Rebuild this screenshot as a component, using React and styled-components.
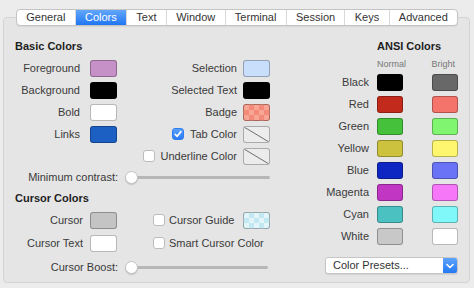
import React from "react";
import styled, { createGlobalStyle } from "styled-components";

const TABS = ["General", "Colors", "Text", "Window", "Terminal", "Session", "Keys", "Advanced"];

const ANSI = [
  { name: "Black", normal: "#000000", bright: "#686868" },
  { name: "Red", normal: "#c22a1c", bright: "#f4736b" },
  { name: "Green", normal: "#46c13b", bright: "#80f56f" },
  { name: "Yellow", normal: "#ccc23d", bright: "#fef66f" },
  { name: "Blue", normal: "#0e26c2", bright: "#6a73f6" },
  { name: "Magenta", normal: "#c136c2", bright: "#f677f7" },
  { name: "Cyan", normal: "#4bc2c1", bright: "#80f8f9" },
  { name: "White", normal: "#c8c8c8", bright: "#ffffff" },
];

const badgeChecker = "repeating-conic-gradient(#f38a79 0 25%, #f7a594 0 50%) 0 0 / 10px 10px";
const guideChecker = "repeating-conic-gradient(#c2e8f1 0 25%, #e4f5f9 0 50%) 0 0 / 10px 10px";

const App = () => {
  return (
    <>
      <GlobalStyle />
      <Window>
        <TabBar>
          {TABS.map((t) => (
            <Tab key={t} $active={t === "Colors"}>
              {t}
            </Tab>
          ))}
        </TabBar>
        <Panel>
          <LeftSection>
            <Heading>Basic Colors</Heading>
            <ColorGrid>
              <Label>Foreground</Label>
              <Swatch $bg="#c591c6" />
              <Label $pad={6}>Selection</Label>
              <Swatch $bg="#c9defb" />

              <Label>Background</Label>
              <Swatch $bg="#000000" />
              <Label $pad={6}>Selected Text</Label>
              <Swatch $bg="#000000" />

              <Label>Bold</Label>
              <Swatch $bg="#ffffff" />
              <Label $pad={6}>Badge</Label>
              <Swatch $bg={badgeChecker} />

              <Label>Links</Label>
              <Swatch $bg="#1b60c2" />
              <CheckLabel>
                <Checkbox checked />
                Tab Color
              </CheckLabel>
              <EmptySwatch />

              <span />
              <span />
              <CheckLabel>
                <Checkbox />
                Underline Color
              </CheckLabel>
              <EmptySwatch />
            </ColorGrid>

            <SliderRow>
              <SliderLabel>Minimum contrast:</SliderLabel>
              <Slider $width={145}>
                <Track />
                <Knob />
              </Slider>
            </SliderRow>

            <Heading>Cursor Colors</Heading>
            <ColorGrid $cursor>
              <Label $pad={7}>Cursor</Label>
              <Swatch $bg="#c4c4c4" />
              <CheckLabel $start>
                <Checkbox />
                Cursor Guide
              </CheckLabel>
              <Swatch $bg={guideChecker} />

              <Label $pad={7}>Cursor Text</Label>
              <Swatch $bg="#ffffff" />
              <CheckLabel $start $span>
                <Checkbox />
                Smart Cursor Color
              </CheckLabel>
            </ColorGrid>

            <SliderRow $tall>
              <SliderLabel>Cursor Boost:</SliderLabel>
              <Slider $width={143}>
                <Track />
                <Knob />
              </Slider>
            </SliderRow>
          </LeftSection>

          <AnsiGrid>
            <AnsiHeading>ANSI Colors</AnsiHeading>
            <SubLabel>Normal</SubLabel>
            <SubLabel $bright>Bright</SubLabel>
            {ANSI.map((c) => (
              <React.Fragment key={c.name}>
                <AnsiLabel>{c.name}</AnsiLabel>
                <Swatch $bg={c.normal} $w={26} />
                <Swatch $bg={c.bright} $w={26} $end />
              </React.Fragment>
            ))}
            <Dropdown>
              <DropText>Color Presets...</DropText>
              <DropButton>
                <svg width="8" height="6" viewBox="0 0 8 6">
                  <path d="M1 1.5 L4 4.5 L7 1.5" fill="none" stroke="#fff" strokeWidth="1.6" strokeLinecap="round" strokeLinejoin="round" />
                </svg>
              </DropButton>
            </Dropdown>
          </AnsiGrid>
        </Panel>
      </Window>
    </>
  );
};

const Checkbox = ({ checked }) => (
  <Box $checked={checked}>
    {checked && (
      <svg width="10" height="10" viewBox="0 0 10 10">
        <path d="M2.2 5.3 L4.2 7.3 L7.9 2.6" fill="none" stroke="#fff" strokeWidth="1.7" strokeLinecap="round" strokeLinejoin="round" />
      </svg>
    )}
  </Box>
);

const EmptySwatch = () => (
  <Swatch $bg="#ececec">
    <svg width="25" height="15" viewBox="0 0 25 15">
      <line x1="0" y1="0" x2="25" y2="15" stroke="#6f6f6f" strokeWidth="1" />
    </svg>
  </Swatch>
);

export default App;

const GlobalStyle = createGlobalStyle`
  html, body {
    margin: 0;
    padding: 0;
  }
  body {
    width: 474px;
    height: 288px;
    overflow: hidden;
    background: #ececec;
    font-family: "Liberation Sans", Arial, sans-serif;
    font-size: 11px;
    color: #3a3a3a;
  }
`;

const Window = styled.div`
  width: 474px;
  height: 288px;
  box-sizing: border-box;
  padding-top: 9px;
  display: flex;
  flex-direction: column;
`;

const TabBar = styled.div`
  align-self: center;
  display: flex;
  height: 17px;
  box-sizing: border-box;
  border: 1px solid #c3c3c3;
  border-radius: 4px;
  background: #fff;
  overflow: hidden;
  position: relative;
  z-index: 1;
  box-shadow: 0 1px 1px rgba(0, 0, 0, 0.06);
`;

const Tab = styled.div`
  padding: 0 9.3px;
  line-height: 15px;
  color: ${(p) => (p.$active ? "#fff" : "#333")};
  background: ${(p) => (p.$active ? "linear-gradient(#63a7fb, #1f76f3)" : "transparent")};
  & + & {
    border-left: 1px solid #d9d9d9;
  }
`;

const Panel = styled.div`
  flex: 1;
  margin: -9px 4px 5px 3px;
  box-sizing: border-box;
  border: 1px solid #d3d3d3;
  border-radius: 4px;
  background: #e5e5e5;
  padding: 17px 0 0 11px;
  display: flex;
`;

const LeftSection = styled.div`
  width: 296px;
  display: flex;
  flex-direction: column;
`;

const Heading = styled.div`
  height: 22px;
  line-height: 22px;
  font-weight: bold;
  color: #1f1f1f;
  white-space: nowrap;
`;

const ColorGrid = styled.div`
  display: grid;
  grid-template-columns: 75px 27px 126px 27px;
  grid-auto-rows: 22px;
  row-gap: ${(p) => (p.$cursor ? 1 : 0)}px;
  align-items: center;
`;

const Label = styled.span`
  justify-self: end;
  padding-right: ${(p) => p.$pad ?? 10}px;
  white-space: nowrap;
`;

const CheckLabel = styled.span`
  display: flex;
  align-items: center;
  gap: ${(p) => (p.$start ? 4 : 6)}px;
  white-space: nowrap;
  justify-self: ${(p) => (p.$start ? "start" : "end")};
  padding-right: ${(p) => (p.$start ? 0 : 6)}px;
  margin-left: ${(p) => (p.$start ? 36 : 0)}px;
  grid-column: ${(p) => (p.$span ? "3 / 5" : "auto")};
`;

const Box = styled.span`
  width: 12px;
  height: 12px;
  box-sizing: border-box;
  border-radius: 3px;
  display: flex;
  align-items: center;
  justify-content: center;
  border: 1px solid ${(p) => (p.$checked ? "#2e7df5" : "#bcbcbc")};
  background: ${(p) => (p.$checked ? "linear-gradient(#5aa0fa, #2a7bf4)" : "#fff")};
`;

const Swatch = styled.div`
  width: ${(p) => p.$w ?? 27}px;
  height: 17px;
  box-sizing: border-box;
  border-radius: 3px;
  border: 1px solid rgba(0, 0, 0, 0.28);
  background: ${(p) => p.$bg};
  justify-self: ${(p) => (p.$end ? "end" : "start")};
  overflow: hidden;
  svg {
    display: block;
  }
`;

const SliderRow = styled.div`
  display: flex;
  align-items: center;
  height: ${(p) => (p.$tall ? 26 : 20)}px;
`;

const SliderLabel = styled.span`
  width: 103px;
  text-align: right;
  white-space: nowrap;
`;

const Slider = styled.div`
  position: relative;
  width: ${(p) => p.$width}px;
  height: 13px;
  margin-left: 7px;
  display: flex;
  align-items: center;
`;

const Track = styled.div`
  width: 100%;
  height: 3px;
  border-radius: 2px;
  background: #b7b7b7;
`;

const Knob = styled.div`
  position: absolute;
  left: 0;
  top: 0;
  width: 13px;
  height: 13px;
  box-sizing: border-box;
  border-radius: 50%;
  background: #fff;
  border: 1px solid #c4c4c4;
  box-shadow: 0 1px 1px rgba(0, 0, 0, 0.15);
`;

const AnsiGrid = styled.div`
  display: grid;
  grid-template-columns: 58px 26px 47px;
  grid-template-rows: 22px 14px repeat(8, 22px);
  column-gap: 8px;
  align-items: center;
  align-content: start;
`;

const AnsiHeading = styled(Heading)`
  grid-column: 2 / 4;
`;

const SubLabel = styled.span`
  grid-column: ${(p) => (p.$bright ? 3 : 2)};
  justify-self: ${(p) => (p.$bright ? "end" : "start")};
  padding-right: ${(p) => (p.$bright ? 3 : 0)}px;
  font-size: 9px;
  color: #777;
  white-space: nowrap;
`;

const AnsiLabel = styled.span`
  justify-self: end;
  white-space: nowrap;
`;

const Dropdown = styled.div`
  grid-column: 1 / -1;
  justify-self: end;
  margin-top: 10px;
  width: 133px;
  height: 17px;
  box-sizing: border-box;
  display: flex;
  background: #fff;
  border: 1px solid #c6c6c6;
  border-radius: 3px;
  box-shadow: 0 1px 1px rgba(0, 0, 0, 0.08);
  overflow: hidden;
`;

const DropText = styled.span`
  flex: 1;
  padding-left: 7px;
  line-height: 15px;
  color: #333;
  white-space: nowrap;
`;

const DropButton = styled.span`
  width: 14px;
  display: flex;
  align-items: center;
  justify-content: center;
  background: linear-gradient(#5fa4fb, #2378f3);
`;
